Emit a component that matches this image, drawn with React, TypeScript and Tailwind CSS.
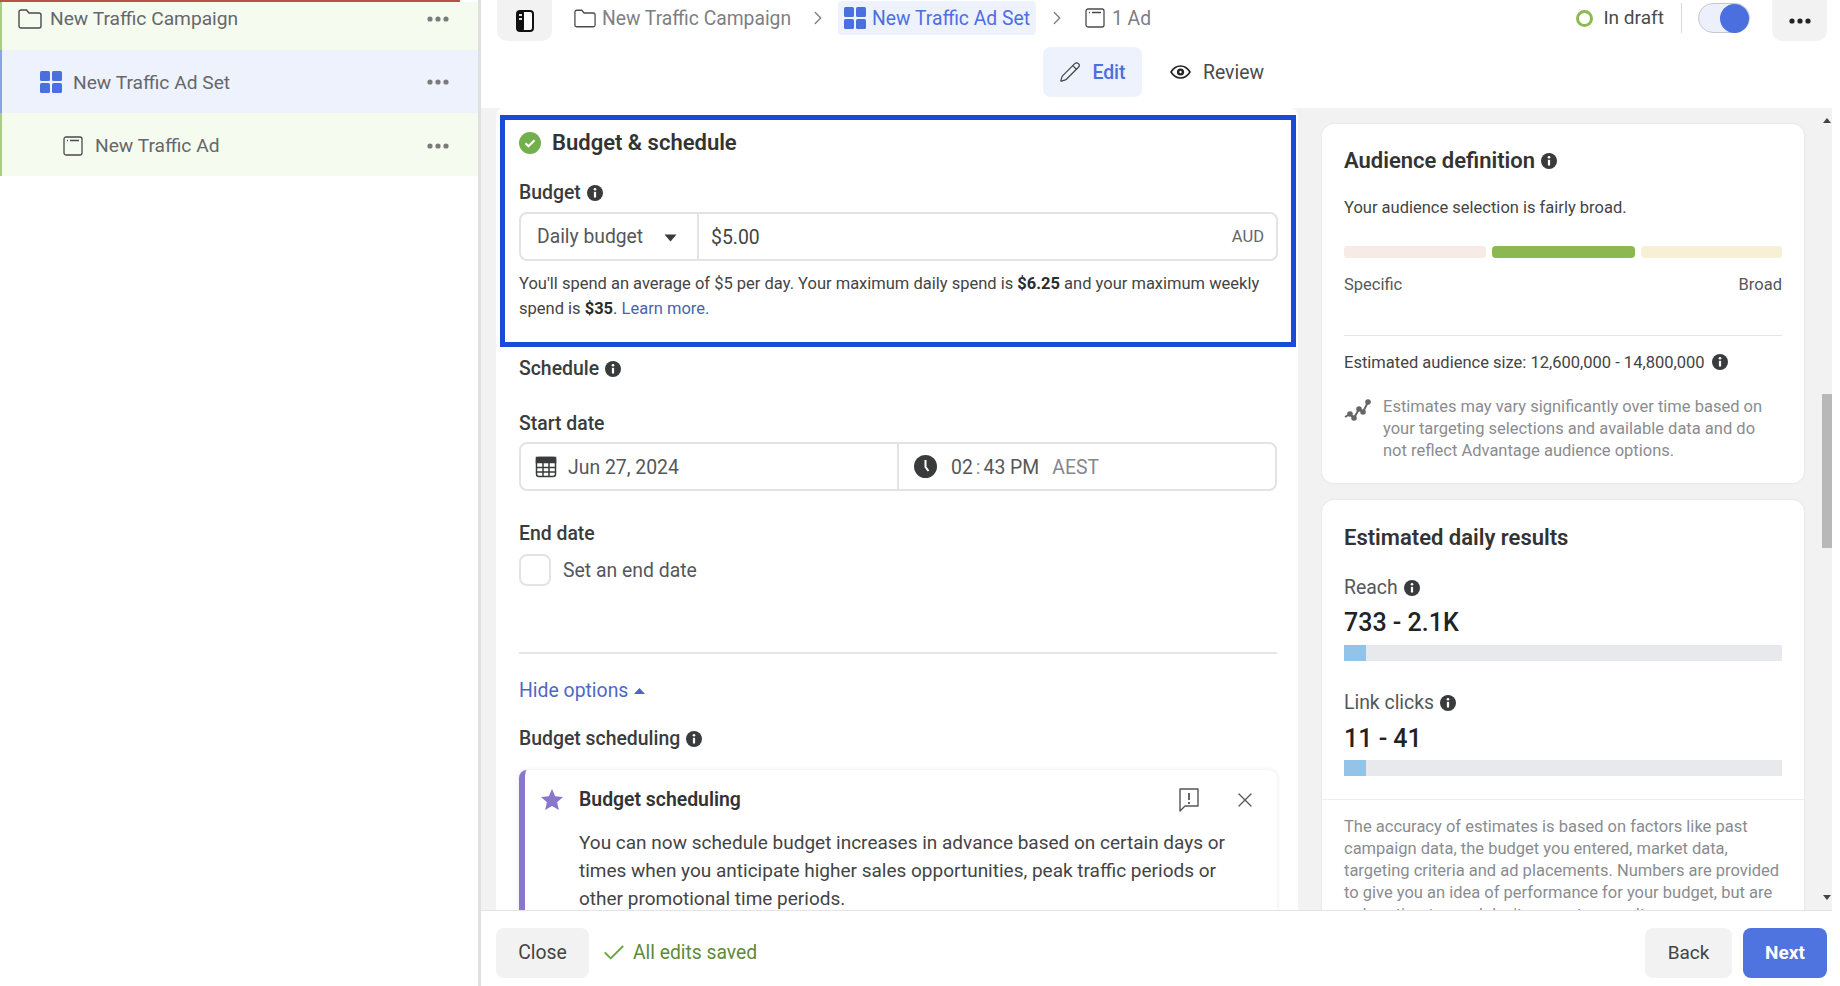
import { Check, ChevronRight, Pencil, X } from 'lucide-react';

function Info({ size = 16 }: { size?: number }) {
  return (
    <svg width={size} height={size} viewBox="0 0 16 16" className="shrink-0">
      <circle cx="8" cy="8" r="8" fill="#3a3b3d" />
      <circle cx="8" cy="4.3" r="1.3" fill="#fff" />
      <rect x="6.9" y="6.8" width="2.2" height="5.8" rx="0.6" fill="#fff" />
    </svg>
  );
}

function FolderIcon({ className }: { className?: string }) {
  return (
    <svg viewBox="0 0 24 20" fill="none" stroke="#4b4b4b" strokeWidth="1.4" className={className}>
      <path d="M1 3a2 2 0 0 1 2-2h5.5l2.5 3h10a2 2 0 0 1 2 2v11a2 2 0 0 1-2 2H3a2 2 0 0 1-2-2z" strokeLinejoin="round" />
    </svg>
  );
}

function GridIcon({ className }: { className?: string }) {
  return (
    <svg viewBox="0 0 22 22" fill="#4c6fdf" className={className}>
      <rect x="0" y="0" width="10" height="10" rx="1.5" />
      <rect x="12" y="0" width="10" height="10" rx="1.5" />
      <rect x="0" y="12" width="10" height="10" rx="1.5" />
      <rect x="12" y="12" width="10" height="10" rx="1.5" />
    </svg>
  );
}

function AdIcon({ className }: { className?: string }) {
  return (
    <svg viewBox="0 0 20 20" fill="none" stroke="#4b4b4b" strokeWidth="1.3" className={className}>
      <rect x="1" y="1" width="18" height="18" rx="2" />
      <path d="M4 4.5h1M7 4.5h9" />
    </svg>
  );
}

function Dots({ color = '#7b7b7b' }: { color?: string }) {
  return (
    <svg width="22" height="6" viewBox="0 0 22 6" fill={color}>
      <circle cx="3" cy="3" r="2.6" />
      <circle cx="11" cy="3" r="2.6" />
      <circle cx="19" cy="3" r="2.6" />
    </svg>
  );
}

export default function App() {
  return (
    <div className="h-[986px] w-[1840px] overflow-hidden bg-white">
      <div className="relative flex h-[986px] w-[1832px] overflow-hidden bg-white font-['Roboto',sans-serif] text-[#3a3b3d]">
        <div className="absolute left-0 top-0 z-10 h-[2px] w-[460px] bg-[#b5534b]" />

        {/* Sidebar */}
        <aside className="w-[481px] shrink-0 border-r-[3px] border-[#e0e0e0] pt-[2px]">
          <div className="flex h-12 items-center border-l-2 border-[#a9cf7b] bg-[#f6fbf0] pb-[14px] pl-[16px] pr-[29px]">
            <FolderIcon className="h-[20px] w-[24px]" />
            <span className="ml-[8px] flex-1 text-[19.2px] text-[#65676b]">New Traffic Campaign</span>
            <Dots />
          </div>
          <div className="flex h-[63px] items-center border-l-2 border-[#8aa3e8] bg-[#edf2fd] pl-[38px] pr-[29px]">
            <GridIcon className="h-[22px] w-[22px]" />
            <span className="ml-[11px] flex-1 pt-[3px] text-[19.2px] text-[#65676b]">New Traffic Ad Set</span>
            <Dots />
          </div>
          <div className="flex h-[63px] items-center border-l-2 border-[#a9cf7b] bg-[#f6fbf0] pl-[61px] pr-[29px] pt-[2px]">
            <AdIcon className="h-[20px] w-[20px]" />
            <span className="ml-[12px] flex-1 pt-[2px] text-[19.2px] text-[#65676b]">New Traffic Ad</span>
            <Dots />
          </div>
        </aside>

        <main className="flex min-w-0 flex-1 flex-col">
          {/* Header */}
          <header className="h-[108px] shrink-0">
            <div className="flex h-[41px] items-start pl-[16px] pr-[5px]">
              <button className="flex h-[41px] w-[55px] items-center justify-center rounded-b-[10px] bg-[#f2f2f2]">
                <svg width="18" height="22" viewBox="0 0 18 22">
                  <rect x="1" y="1" width="16" height="20" rx="3" fill="#fff" stroke="#111" strokeWidth="2" />
                  <rect x="1" y="1" width="7" height="20" rx="2" fill="#111" />
                  <rect x="3" y="4" width="3" height="2" fill="#ddd" />
                  <rect x="3" y="8" width="3" height="2" fill="#ddd" />
                </svg>
              </button>
              <div className="ml-[22px] flex h-[36px] items-center text-[19.3px] text-[#7d7f83]">
                <FolderIcon className="h-[19px] w-[22px]" />
                <span className="ml-[6px] pt-[2px]">New Traffic Campaign</span>
                <ChevronRight className="ml-[16px] h-[22px] w-[22px] text-[#7d7f83]" strokeWidth={1.5} />
                <div className="ml-[9px] flex h-[34px] items-center rounded-[4px] bg-[#edf2fd] px-[6px] text-[#4c6fdf]">
                  <GridIcon className="h-[22px] w-[22px]" />
                  <span className="ml-[6px] pt-[2px]">New Traffic Ad Set</span>
                </div>
                <ChevronRight className="ml-[10px] h-[22px] w-[22px] text-[#7d7f83]" strokeWidth={1.5} />
                <AdIcon className="ml-[17px] h-[20px] w-[20px]" />
                <span className="ml-[7px] pt-[2px]">1 Ad</span>
              </div>
              <div className="ml-auto flex h-[36px] items-center">
                <span className="h-[17px] w-[17px] rounded-full border-[3px] border-[#8cba51]" />
                <span className="ml-[10px] pt-[1px] text-[19.1px] text-[#4a4b4d]">In draft</span>
                <span className="ml-[17px] h-[30px] w-px bg-[#d8d8d8]" />
                <div className="ml-[16px] flex h-[30px] w-[52px] items-center justify-end rounded-full border border-[#c5c8d0] bg-[#edf0fb]">
                  <span className="h-[29px] w-[29px] rounded-full bg-[#4c6fdf]" />
                </div>
              </div>
              <button className="ml-[22px] flex h-[41px] w-[55px] items-center justify-center rounded-b-[10px] bg-[#f2f2f2]">
                <Dots color="#222" />
              </button>
            </div>
            <div className="mt-[6px] flex h-[50px] items-center justify-center">
              <button className="flex h-[50px] w-[99px] items-center justify-center gap-[11px] rounded-[8px] bg-[#edf2fd] text-[19.4px] font-medium text-[#4c6fdf]">
                <Pencil className="h-[22px] w-[22px] text-[#444]" strokeWidth={1.3} />
                <span className="pt-[2px]">Edit</span>
              </button>
              <button className="flex h-[50px] items-center gap-[12px] pl-[28px] pr-[6px] text-[19.4px] text-[#4a4b4d]">
                <svg width="21" height="14" viewBox="0 0 21 14">
                  <path d="M1 7c2.5-4 5.8-6 9.5-6s7 2 9.5 6c-2.5 4-5.8 6-9.5 6S3.5 11 1 7z" fill="#fff" stroke="#222" strokeWidth="1.6" />
                  <circle cx="10.5" cy="7" r="3.6" fill="#222" />
                  <circle cx="10.5" cy="7" r="1.2" fill="#fff" />
                </svg>
                <span className="pt-[2px]">Review</span>
              </button>
            </div>
          </header>

          {/* Content */}
          <div className="flex min-h-0 flex-1 overflow-hidden bg-[#f2f2f2] pl-[15px]">
            <section className="w-[802px] shrink-0 rounded-t-[8px] bg-white">
              <div className="ml-[4px] mt-[7px] w-[796px] border-[5px] border-[#1a4ad6] pb-[21px] pl-[14px] pr-[13px] pt-[9px]">
                <div className="flex h-[28px] items-center">
                  <svg width="22" height="22" viewBox="0 0 22 22" className="-mt-[1px] shrink-0">
                    <circle cx="11" cy="11" r="11" fill="#72b04d" />
                    <path d="M6.5 11.3l3 3 6-6" fill="none" stroke="#fff" strokeWidth="2" />
                  </svg>
                  <h2 className="ml-[11px] text-[22px] font-semibold leading-[28px] text-[#333]">Budget &amp; schedule</h2>
                </div>
                <div className="mt-[24px] flex h-[24px] items-center gap-[6px] text-[19.4px] font-medium">
                  Budget <Info />
                </div>
                <div className="mt-[7px] flex h-[49px] items-center rounded-[8px] border-2 border-[#e3e3e3]">
                  <div className="flex h-full w-[178px] items-center border-r-2 border-[#e3e3e3] pl-[16px] pt-[2px] text-[19.3px] text-[#55575a]">
                    Daily budget
                    <svg width="13" height="8" viewBox="0 0 13 8" className="ml-[21px]">
                      <path d="M0.5 0.5h12L6.5 7.5z" fill="#3a3b3d" />
                    </svg>
                  </div>
                  <span className="ml-[12px] flex-1 pt-[2px] text-[19.4px] text-[#444]">$5.00</span>
                  <span className="mr-[12px] pt-[2px] text-[16.5px] text-[#65676b]">AUD</span>
                </div>
                <div className="mt-[10px] text-[16.5px] leading-[25px] text-[#444]">
                  <p>You'll spend an average of $5 per day. Your maximum daily spend is <b className="font-bold text-[#2b2b2b]">$6.25</b> and your maximum weekly</p>
                  <p>spend is <b className="font-bold text-[#2b2b2b]">$35</b>. <a className="text-[#4a64a8]">Learn more.</a></p>
                </div>
              </div>

              <div className="pl-[23px] pr-[21px]">
                <div className="mt-[10px] flex h-[24px] items-center gap-[6px] text-[19.4px] font-medium">
                  Schedule <Info />
                </div>
                <div className="mt-[31px] h-[24px] text-[19.4px] font-medium leading-[24px]">Start date</div>
                <div className="mt-[6px] flex h-[49px] items-center rounded-[8px] border-2 border-[#e3e3e3]">
                  <div className="flex h-full w-[378px] items-center border-r-2 border-[#e3e3e3] pl-[14px] text-[19.4px] text-[#55575a]">
                    <svg width="22" height="22" viewBox="0 0 22 22" fill="none" stroke="#3a3b3d" strokeWidth="1.5">
                      <rect x="1.5" y="1.5" width="19" height="19" rx="2.5" />
                      <rect x="1.5" y="1.5" width="19" height="5" fill="#3a3b3d" />
                      <path d="M1.5 11.5h19M1.5 16h19M8 6.5v14M14 6.5v14" />
                    </svg>
                    <span className="ml-[11px] pt-[2px]">Jun 27, 2024</span>
                  </div>
                  <svg width="23" height="23" viewBox="0 0 23 23" className="ml-[15px]">
                    <circle cx="11.5" cy="11.5" r="11.5" fill="#3a3b3d" />
                    <path d="M11.5 5v7l3 4" fill="none" stroke="#fff" strokeWidth="2" />
                  </svg>
                  <span className="ml-[14px] pt-[2px] text-[19.4px] text-[#55575a]">02<span className="mx-[3px] text-[#999]">:</span>43 PM</span>
                  <span className="ml-[13px] pt-[2px] text-[19.4px] text-[#85878a]">AEST</span>
                </div>
                <div className="mt-[31px] h-[24px] text-[19.4px] font-medium leading-[24px]">End date</div>
                <div className="mt-[8px] flex h-[32px] items-center">
                  <span className="h-[32px] w-[32px] rounded-[8px] border-2 border-[#e3e3e3]" />
                  <span className="ml-[12px] pt-[1px] text-[19.4px] text-[#55575a]">Set an end date</span>
                </div>
                <div className="mt-[66px] h-[2px] bg-[#e6e6e6]" />
                <div className="mt-[25px] flex h-[24px] items-center text-[19.4px] text-[#4c68c4]">
                  Hide options
                  <svg width="11" height="6" viewBox="0 0 11 6" className="ml-[6px]">
                    <path d="M0 6h11L5.5 0z" fill="#4c68c4" />
                  </svg>
                </div>
                <div className="mt-[24px] flex h-[24px] items-center gap-[6px] text-[19.4px] font-medium">
                  Budget scheduling <Info />
                </div>
                <div className="mt-[19px] h-[160px] rounded-[8px] border-l-[6px] border-[#8877cc] pl-[54px] pr-[18px] pt-[18px] shadow-[0_0_4px_rgba(0,0,0,0.1)]">
                  <div className="relative flex h-[24px] items-center text-[19.4px] font-semibold text-[#333]">
                    <svg width="24" height="24" viewBox="0 0 24 24" fill="#8877cc" className="absolute -left-[39px] top-0">
                      <path d="M12 1l3.2 7.2 7.8.8-5.9 5.2 1.8 7.8L12 18l-6.9 4 1.8-7.8L1 9l7.8-.8z" />
                    </svg>
                    <span className="flex-1">Budget scheduling</span>
                    <svg width="22" height="28" viewBox="0 0 22 28" fill="none" stroke="#555" strokeWidth="1.4">
                      <path d="M2 3h18v17H7l-5 5z" strokeLinejoin="round" />
                      <path d="M11 7v7M11 16v2" strokeWidth="1.8" />
                    </svg>
                    <X className="ml-[33px] mr-[2px] h-[24px] w-[24px] text-[#555]" strokeWidth={1.3} />
                  </div>
                  <p className="mt-[17px] text-[19px] leading-[28px] text-[#444]">
                    You can now schedule budget increases in advance based on certain days or times when you anticipate higher sales opportunities, peak traffic periods or other promotional time periods.
                  </p>
                </div>
              </div>
            </section>

            {/* Right cards */}
            <div className="ml-[24px] mt-[16px] flex w-[482px] shrink-0 flex-col gap-[17px]">
              <div className="rounded-[12px] bg-white pb-[21px] pl-[22px] pr-[22px] pt-[23px] shadow-[0_0_3px_rgba(0,0,0,0.08)]">
                <div className="flex h-[28px] items-center gap-[6px] text-[22px] font-semibold leading-[28px] text-[#333]">
                  Audience definition <Info />
                </div>
                <p className="mt-[21px] text-[16.5px] leading-[24px] text-[#444]">Your audience selection is fairly broad.</p>
                <div className="mt-[26px] flex gap-[6px]">
                  <div className="h-[12px] w-[142px] rounded-[4px] bg-[#f6ebe6]" />
                  <div className="h-[12px] w-[143px] rounded-[4px] bg-[#8cb852]" />
                  <div className="h-[12px] flex-1 rounded-[4px] bg-[#f8f0d4]" />
                </div>
                <div className="mt-[16px] flex justify-between text-[16.5px] leading-[22px] text-[#55575a]">
                  <span>Specific</span>
                  <span>Broad</span>
                </div>
                <div className="mt-[39px] h-px bg-[#e6e6e6]" />
                <div className="mt-[16px] flex h-[22px] items-center gap-[7px] text-[16.5px] text-[#444]">
                  Estimated audience size: 12,600,000 - 14,800,000 <span className="-mt-[3px]"><Info /></span>
                </div>
                <div className="mt-[22px] flex">
                  <svg width="27" height="22" viewBox="0 0 27 22" fill="none" stroke="#666" strokeWidth="2" className="mt-[3px] shrink-0">
                    <path d="M1 18l5-3 4 4 5-9 4 3 5-10" />
                    <circle cx="6" cy="15" r="1.8" fill="#666" />
                    <circle cx="10" cy="19" r="1.8" fill="#666" />
                    <circle cx="15" cy="10" r="1.8" fill="#666" />
                    <circle cx="19" cy="13" r="1.8" fill="#666" />
                    <circle cx="24" cy="3" r="1.8" fill="#666" />
                  </svg>
                  <p className="ml-[12px] text-[16.5px] leading-[22px] text-[#8a8c90]">
                    Estimates may vary significantly over time based on your targeting selections and available data and do not reflect Advantage audience options.
                  </p>
                </div>
              </div>

              <div className="rounded-t-[12px] bg-white pt-[24px] shadow-[0_0_3px_rgba(0,0,0,0.08)]">
                <div className="pl-[22px] pr-[22px]">
                  <div className="h-[28px] text-[22px] font-semibold leading-[28px] text-[#333]">Estimated daily results</div>
                  <div className="mt-[24px] flex h-[24px] items-center gap-[6px] text-[19.4px] text-[#55575a]">
                    Reach <Info />
                  </div>
                  <div className="mt-[8px] h-[30px] text-[25px] font-medium leading-[30px] text-[#222]">733 - 2.1K</div>
                  <div className="mt-[7px] h-[16px] bg-[#e8e9ec]">
                    <div className="h-full w-[22px] bg-[#93c4e8]" />
                  </div>
                  <div className="mt-[30px] flex h-[24px] items-center gap-[6px] text-[19.4px] text-[#55575a]">
                    Link clicks <Info />
                  </div>
                  <div className="mt-[9px] h-[30px] text-[25px] font-medium leading-[30px] text-[#222]">11 - 41</div>
                  <div className="mt-[6px] h-[16px] bg-[#e8e9ec]">
                    <div className="h-full w-[22px] bg-[#93c4e8]" />
                  </div>
                </div>
                <div className="mt-[23px] h-px bg-[#eeeeee]" />
                <p className="mt-[16px] pl-[22px] pr-[20px] text-[16.5px] leading-[22px] text-[#8a8c90]">
                  The accuracy of estimates is based on factors like past campaign data, the budget you entered, market data, targeting criteria and ad placements. Numbers are provided to give you an idea of performance for your budget, but are only estimates and don't guarantee results.
                </p>
              </div>
            </div>

            {/* Scrollbar */}
            <div className="relative ml-[18px] w-[10px] shrink-0">
              <div className="absolute left-[1px] top-[10px] h-0 w-0 border-x-[4px] border-b-[5px] border-x-transparent border-b-[#444]" />
              <div className="absolute left-0 top-[286px] h-[154px] w-full bg-[#b8b8b8]" />
              <div className="absolute bottom-[10px] left-[1px] h-0 w-0 border-x-[4px] border-t-[5px] border-x-transparent border-t-[#444]" />
            </div>
          </div>

          {/* Footer */}
          <footer className="flex h-[76px] shrink-0 items-start border-t border-[#e4e4e8] bg-white pl-[15px] pr-[5px] pt-[17px]">
            <button className="h-[50px] w-[93px] rounded-[8px] bg-[#f2f2f2] text-[19.4px] text-[#444]">Close</button>
            <div className="ml-[12px] flex h-[50px] items-center text-[19.3px] text-[#5f8a3a]">
              <Check className="h-[26px] w-[26px] text-[#6aa84a]" strokeWidth={1.8} />
              <span className="ml-[6px]">All edits saved</span>
            </div>
            <button className="ml-auto h-[50px] w-[87px] rounded-[8px] bg-[#f2f2f2] text-[19px] text-[#444]">Back</button>
            <button className="ml-[11px] h-[50px] w-[84px] rounded-[8px] bg-[#4f73df] text-[19px] font-bold text-white">Next</button>
          </footer>
        </main>
      </div>
    </div>
  );
}
